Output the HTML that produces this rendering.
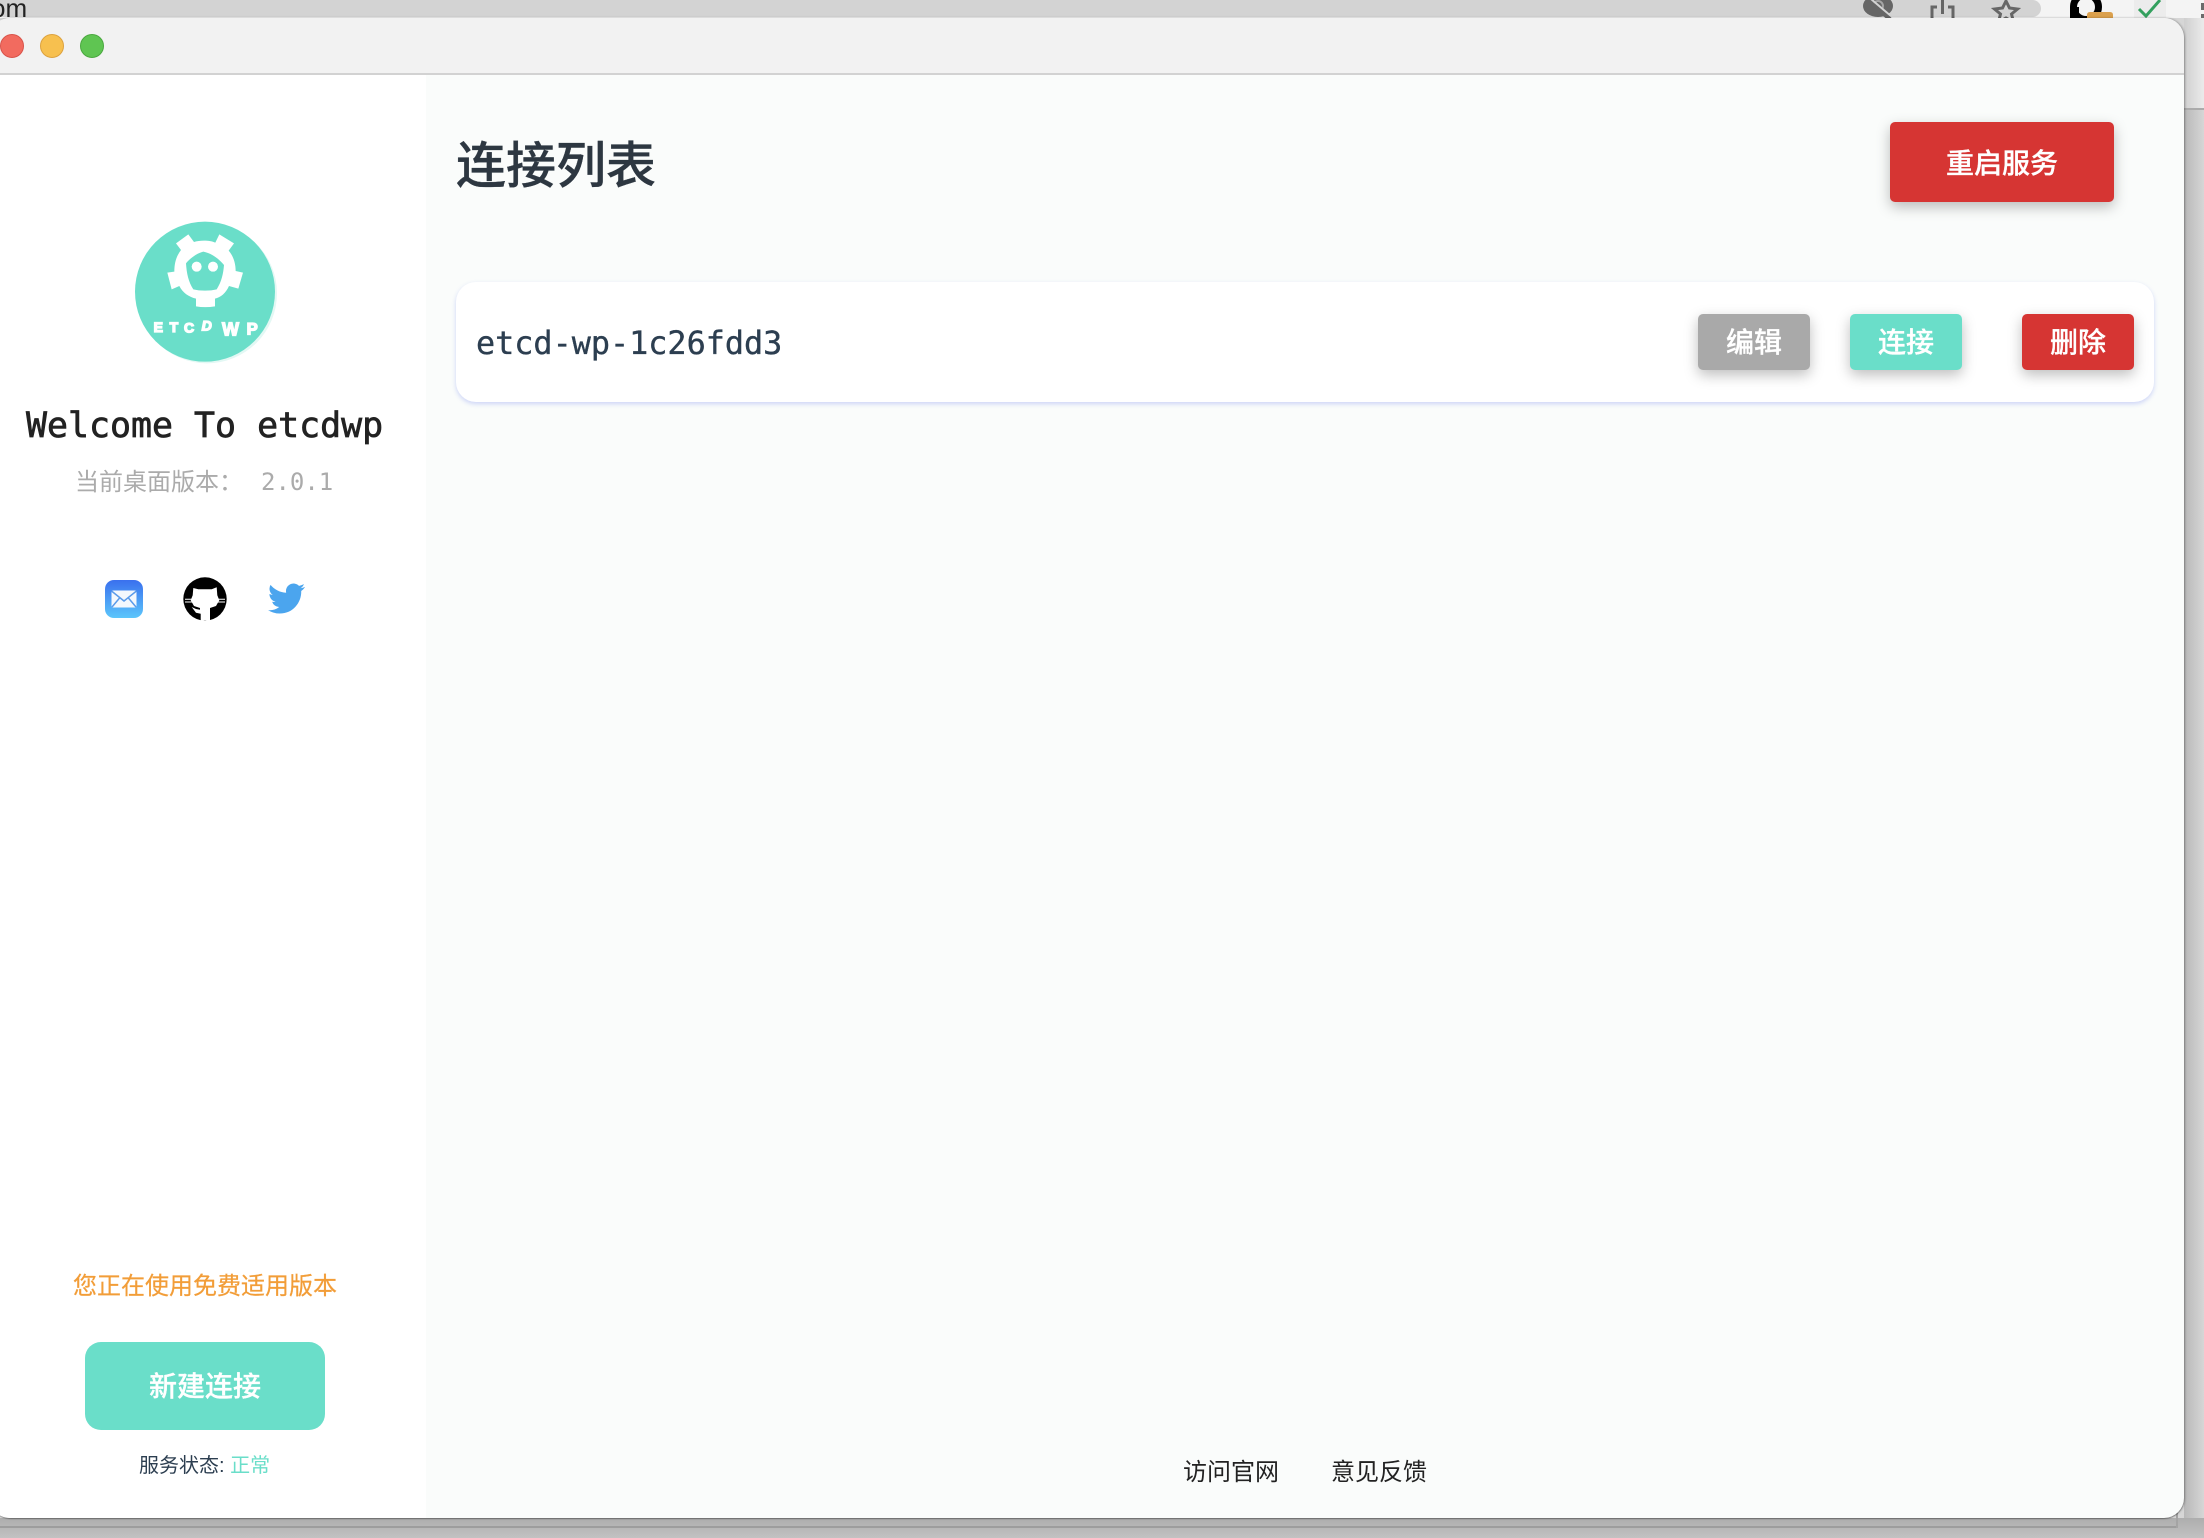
<!DOCTYPE html>
<html lang="zh">
<head>
<meta charset="utf-8">
<title>etcdwp</title>
<style>
html,body{margin:0;padding:0;width:2204px;height:1538px;overflow:hidden;background:#d6d6d6}
body{position:relative;font-family:"Liberation Sans","Noto Sans CJK SC",sans-serif}
.abs{position:absolute}
.t{position:absolute;white-space:nowrap;line-height:1}
.btn{position:absolute;color:#fff;text-align:center;border-radius:5px;font-size:28px;font-weight:500;font-family:"Noto Sans CJK SC",sans-serif;box-shadow:0 5px 14px rgba(0,0,0,.26);-webkit-text-stroke:.3px #fff}
.red{background:#d63533}
.teal{background:#6adec9}
.gray{background:#a9a9a9}
</style>
</head>
<body>
<!-- backdrop -->
<div class="abs" style="left:2184px;top:18px;width:20px;height:90px;background:linear-gradient(90deg,#cfcfcf,#ebebeb)"></div>
<div class="abs" style="left:2184px;top:108px;width:20px;height:2px;background:#ababab"></div>
<div class="abs" style="left:2184px;top:110px;width:20px;height:1428px;background:linear-gradient(90deg,#b8b8b8,#d6d6d6)"></div>
<div class="abs" style="left:0;top:1518px;width:2204px;height:20px;background:linear-gradient(180deg,#adadad,#c2c2c2)"></div>
<div class="abs" style="left:0;top:1526px;width:2178px;height:2px;background:#9d9d9d"></div>
<div class="abs" style="left:2176px;top:1510px;width:2px;height:18px;background:#a4a4a4"></div>

<!-- browser strip -->
<div class="abs" style="left:0;top:0;width:2204px;height:18px;overflow:hidden;background:#f4f4f4">
  <div class="abs" style="left:0;top:0;width:2041px;height:17px;background:#d3d3d3;border-radius:0 17px 17px 0"></div>
  <div class="abs" style="left:2134px;top:0;width:32px;height:18px;background:#ececec"></div>
  <div class="t" style="left:-9px;top:-7px;font-size:26px;color:#222;line-height:30px">om</div>
  <svg class="abs" style="left:0;top:0" width="2204" height="18" viewBox="0 0 2204 18">
    <ellipse cx="1878" cy="6" rx="15" ry="11" fill="#666"/>
    <path d="M1874 3a5 5 0 0 1 8 6" fill="none" stroke="#a5a5a5" stroke-width="2"/>
    <path d="M1871 -1L1892 17" stroke="#d3d3d3" stroke-width="2"/>
    <path d="M1866 0L1890 19" stroke="#666" stroke-width="4"/>
    <g fill="none" stroke="#666" stroke-width="3">
      <path d="M1932 18V7h5M1953 18V7h-5M1942.500 14V-2"/>
      <path d="M2006 1l3.500 7 8 1-6 5 2 8-7.500-4-7.500 4 2-8-6-5 8-1z"/>
    </g>
    <circle cx="2086" cy="7" r="12.500" fill="none" stroke="#000" stroke-width="7"/>
    <path d="M2070 7h9v11h-9z" fill="#000"/>
    <path d="M2087 15q0-3 3-3h20q3 0 3 3v3h-26z" fill="#dba04d"/>
    <path d="M2139 9l7 7 14-16" fill="none" stroke="#33a05e" stroke-width="3"/>
    <rect x="2201" y="3" width="3" height="7" fill="#6b6b6b"/>
    <rect x="2201" y="14" width="3" height="4" fill="#6b6b6b"/>
  </svg>
</div>

<!-- window -->
<div class="abs" style="left:-10px;top:18px;width:2194px;height:1500px;border-radius:20px;overflow:hidden;background:#fafcfb;box-shadow:0 1px 1px rgba(0,0,0,.3),1px 0 2px rgba(0,0,0,.3)">
  <div class="abs" style="left:0;top:0;width:2194px;height:55px;background:#f2f2f2;border-bottom:2px solid #d2d2d2"></div>
  <div class="abs" style="left:0;top:57px;width:436px;height:1443px;background:#fff"></div>
</div>

<!-- traffic lights -->
<div class="abs" style="left:0;top:34px;width:24px;height:24px;border-radius:50%;background:#f26b5f;box-sizing:border-box;border:1px solid #d9534a"></div>
<div class="abs" style="left:40px;top:34px;width:24px;height:24px;border-radius:50%;background:#f7c04f;box-sizing:border-box;border:1px solid #dda23e"></div>
<div class="abs" style="left:80px;top:34px;width:24px;height:24px;border-radius:50%;background:#5fc552;box-sizing:border-box;border:1px solid #4aa83f"></div>

<!-- logo -->
<svg class="abs" style="left:120px;top:210px" width="170" height="170" viewBox="0 0 510 510">
  <circle cx="261" cy="250" r="210" fill="#e3f8f4"/>
  <circle cx="255" cy="245" r="210" fill="#6adec9"/>
  <path fill="#fff" fill-rule="evenodd" d="M205 73L222 96C240 90 270 90 286 98L298 73L342 100L326 122C340 138 347 160 347 183L369 188L355 236L327 228C317 250 302 262 285 266L285 289Q255 294 228 289L228 266C205 260 188 248 178 228L155 238L142 188L163 185C163 160 168 140 183 120L168 100ZM250 125C230 130 210 145 198 160C200 190 205 215 220 238C240 243 270 243 290 238C305 215 310 190 312 165C295 145 275 130 250 125Z"/>
  <circle cx="230" cy="170" r="15" fill="#fff"/>
  <circle cx="279" cy="170" r="15" fill="#fff"/>
  <g fill="#fff" stroke="#fff" stroke-width="4" font-family="Liberation Sans,sans-serif" font-weight="bold" font-size="42">
    <text x="101" y="366">E</text>
    <text x="149" y="366">T</text>
    <text x="192" y="368">C</text>
    <text x="245" y="362" font-style="italic">D</text>
    <text x="306" y="376" font-size="54">W</text>
    <text x="380" y="374" font-size="50">P</text>
  </g>
</svg>

<!-- sidebar text -->
<div class="t" style="left:26px;top:407px;font:34.900px/38px 'DejaVu Sans Mono',monospace;-webkit-text-stroke:.7px #222;color:#222">Welcome To etcdwp</div>
<div class="t" style="left:75px;top:471px;font-family:'Liberation Mono','Noto Sans CJK SC',monospace;font-size:24px;line-height:28px;color:#ababab">当前桌面版本：</div>
<div class="t" style="left:261px;top:468px;font:24px/28px 'DejaVu Sans Mono',monospace;color:#ababab">2.0.1</div>

<!-- mail -->
<svg class="abs" style="left:105px;top:580px" width="38" height="38" viewBox="0 0 38 38">
  <defs><linearGradient id="m" x1="0" y1="0" x2="0" y2="1"><stop offset="0" stop-color="#3a70ee"/><stop offset="1" stop-color="#5cc6fb"/></linearGradient></defs>
  <rect width="38" height="38" rx="9" fill="url(#m)"/>
  <rect x="6.500" y="10.500" width="25" height="17" rx="1.500" fill="#f4f8fd"/>
  <path d="M6.500 11L19 21L31.500 11M7 27L15 17.500M31 27L23 17.500" fill="none" stroke="#5b9bea" stroke-width="1.500"/>
</svg>
<!-- github -->
<svg class="abs" style="left:183px;top:577px" width="44" height="44" viewBox="0 0 44 44">
  <circle cx="22" cy="22" r="21.700" fill="#000"/>
  <path fill="#fff" d="M10.300 11L15.300 12.300H28.700L33.700 10.300L34.300 18.300L36.300 23.300L33 29L27 31V43.500H17.700V36.700L13 35.700L8.700 30L13 32L17 32.700V31L11 29L7.700 23.300L9.700 18.300Z"/>
  <path d="M2 22.300H10M2 25H10M33.700 22.300H42M33.700 25H42" stroke="#fff" stroke-width="1" fill="none"/>
</svg>
<!-- twitter -->
<svg class="abs" style="left:268px;top:582px" width="37" height="33" viewBox="0 1.500 24 21">
  <path fill="#4ba5ee" d="M23.953 4.570a10 10 0 01-2.825.775 4.958 4.958 0 002.163-2.723c-.951.555-2.005.959-3.127 1.184a4.920 4.920 0 00-8.384 4.482C7.690 8.095 4.067 6.130 1.640 3.162a4.822 4.822 0 00-.666 2.475c0 1.710.87 3.213 2.188 4.096a4.904 4.904 0 01-2.228-.616v.06a4.923 4.923 0 003.946 4.827 4.996 4.996 0 01-2.212.085 4.936 4.936 0 004.604 3.417 9.867 9.867 0 01-6.102 2.105c-.39 0-.779-.023-1.170-.067a13.995 13.995 0 007.557 2.209c9.053 0 13.998-7.496 13.998-13.985 0-.21 0-.42-.015-.63A9.935 9.935 0 0024 4.590z"/>
</svg>

<!-- sidebar bottom -->
<div class="t" style="left:73px;top:1270px;width:264px;text-align:center;font-size:24px;line-height:28px;color:#f29d38;-webkit-text-stroke:.2px #f29d38;font-family:'Noto Sans CJK SC',sans-serif">您正在使用免费适用版本</div>
<div class="abs teal" style="left:85px;top:1342px;width:240px;height:88px;border-radius:16px;color:#fff;text-align:center;-webkit-text-stroke:.3px #fff;font:500 28px/86px 'Noto Sans CJK SC',sans-serif">新建连接</div>
<div class="t" style="left:139px;top:1453px;font-size:20px;line-height:26px;color:#2c3e50;font-family:'Liberation Sans','Noto Sans CJK SC',sans-serif">服务状态: <span style="color:#6adec9">正常</span></div>

<!-- main -->
<div class="t" style="left:456px;top:127px;font:500 50px/70px 'Noto Sans CJK SC',sans-serif;color:#2d3741;-webkit-text-stroke:.3px #2d3741">连接列表</div>
<div class="btn red" style="left:1890px;top:122px;width:224px;height:80px;line-height:80px">重启服务</div>

<div class="abs" style="left:456px;top:282px;width:1698px;height:120px;border-radius:20px;background:#fff;box-shadow:0 2px 5px rgba(110,130,240,.32)"></div>
<div class="t" style="left:476px;top:325px;font:31.800px/38px 'DejaVu Sans Mono',monospace;color:#2c3e50;-webkit-text-stroke:.35px #2c3e50">etcd-wp-1c26fdd3</div>
<div class="btn gray" style="left:1698px;top:314px;width:112px;height:56px;line-height:55px">编辑</div>
<div class="btn teal" style="left:1850px;top:314px;width:112px;height:56px;line-height:55px">连接</div>
<div class="btn red" style="left:2022px;top:314px;width:112px;height:56px;line-height:55px">删除</div>

<div class="t" style="left:1183px;top:1456px;font:24px/28px 'Noto Sans CJK SC',sans-serif;color:#222">访问官网</div>
<div class="t" style="left:1331px;top:1456px;font:24px/28px 'Noto Sans CJK SC',sans-serif;color:#222">意见反馈</div>
</body>
</html>
